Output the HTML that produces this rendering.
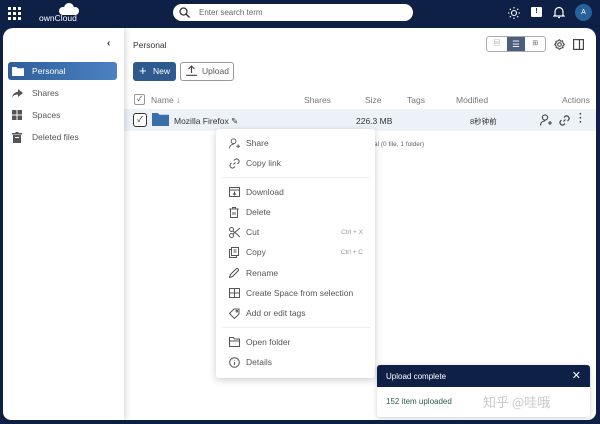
<!DOCTYPE html>
<html><head><meta charset="utf-8">
<style>
*{box-sizing:border-box;margin:0;padding:0}
body{width:600px;height:424px;background:#0e2045;font-family:"Liberation Sans","Noto Sans CJK SC",sans-serif;font-size:8.5px;color:#4b4f58;position:relative;overflow:hidden}
.abs{position:absolute}
.side{left:3px;top:28px;width:121px;height:392px;background:#fff;border-radius:10px 0 0 8px;box-shadow:2px 0 6px rgba(0,0,0,.15);z-index:2}
.main{left:124px;top:28px;width:472px;height:392px;background:#fff;border-radius:0 10px 8px 0}
.nav{position:absolute;left:5px;width:109px;height:18px;display:flex;align-items:center;padding-left:24px;color:#555}
.nav.act{background:linear-gradient(90deg,#2f5d99,#4b82c3);color:#fff;border-radius:3px}
.nav svg{position:absolute;left:4px}
.menu{left:216px;top:129px;width:159px;height:249px;background:#fff;box-shadow:0 2px 8px rgba(0,0,0,.2);border-radius:3px;z-index:3}
.mi{position:absolute;left:0;width:159px;height:14px;display:flex;align-items:center;padding-left:30px;color:#555}
.mi svg{position:absolute;left:13px}
.mi .k{position:absolute;right:12px;font-size:6.5px;color:#999}
.sep{position:absolute;left:6px;width:148px;height:1px;background:#eee}
</style></head><body>
<svg class="abs" style="left:8px;top:7px" width="13" height="13" viewBox="0 0 13 13" fill="#fff">
<rect x="0" y="0" width="3" height="3"/><rect x="5" y="0" width="3" height="3"/><rect x="10" y="0" width="3" height="3"/>
<rect x="0" y="5" width="3" height="3"/><rect x="5" y="5" width="3" height="3"/><rect x="10" y="5" width="3" height="3"/>
<rect x="0" y="10" width="3" height="3"/><rect x="5" y="10" width="3" height="3"/><rect x="10" y="10" width="3" height="3"/></svg>
<svg class="abs" style="left:54px;top:2px" width="30" height="14" viewBox="0 0 30 14" fill="#fff"><circle cx="9" cy="9" r="4"/><circle cx="15" cy="6" r="5"/><circle cx="21" cy="9" r="4"/><rect x="9" y="8" width="12" height="5"/></svg>
<div class="abs" style="left:39px;top:13px;color:#fff;font-size:8.5px">ownCloud</div>
<div class="abs" style="left:173px;top:4px;width:240px;height:17px;background:#fff;border-radius:9px"></div>
<svg class="abs" style="left:179px;top:7px" width="11" height="11" viewBox="0 0 11 11" fill="none" stroke="#333" stroke-width="1.3"><circle cx="4.5" cy="4.5" r="3.5"/><path d="M7 7l3.5 3.5"/></svg>
<div class="abs" style="left:199px;top:8px;color:#666;font-size:8px">Enter search term</div>
<svg class="abs" style="left:508px;top:7px" width="12" height="12" viewBox="0 0 12 12" fill="none" stroke="#fff" stroke-width="1.1"><circle cx="6" cy="6" r="2.5"/><path d="M6 0v1.5M6 10.5V12M0 6h1.5M10.5 6H12M1.8 1.8l1 1M9.2 9.2l1 1M1.8 10.2l1-1M9.2 2.8l1-1"/></svg>
<div class="abs" style="left:531px;top:7px;width:11px;height:10px;background:#fff;border-radius:1px;color:#0e2045;font-size:7px;font-weight:bold;text-align:center;line-height:10px">!</div>
<svg class="abs" style="left:553px;top:6px" width="12" height="13" viewBox="0 0 12 13" fill="none" stroke="#fff" stroke-width="1.2"><path d="M2 9V5.5a4 4 0 0 1 8 0V9l1 1H1z"/><path d="M5 11.5h2"/></svg>
<div class="abs" style="left:575px;top:4px;width:17px;height:17px;border-radius:50%;background:#27619a;color:#fff;font-size:7px;text-align:center;line-height:17px">A</div>

<div class="abs side">
  <div class="abs" style="left:104px;top:10px;font-size:10px;color:#333;font-weight:bold">‹</div>
  <div class="nav act" style="top:34px">
    <svg width="12" height="10" viewBox="0 0 12 10" fill="#fff"><path d="M0 1h4.5l1 1.3H12V10H0z"/></svg>Personal</div>
  <div class="nav" style="top:56px"><svg width="11" height="9" viewBox="0 0 11 9" fill="#555"><path d="M6 0l5 4-5 4V5.5C3 5.5 1 6.5 0 9 .5 5 3 3 6 2.7z"/></svg>Shares</div>
  <div class="nav" style="top:78px"><svg width="10" height="10" viewBox="0 0 10 10" fill="#555"><rect width="4.5" height="4.5"/><rect x="5.5" width="4.5" height="4.5"/><rect y="5.5" width="4.5" height="4.5"/><rect x="5.5" y="5.5" width="4.5" height="4.5"/></svg>Spaces</div>
  <div class="nav" style="top:100px"><svg width="10" height="11" viewBox="0 0 10 11" fill="#555"><rect x="0" y="1" width="10" height="1.5"/><rect x="3.5" y="0" width="3" height="1.5"/><path d="M1 3h8v8H1z"/><rect x="3" y="5" width="4" height="1" fill="#fff"/></svg>Deleted files</div>
</div>

<div class="abs main">
  <div class="abs" style="left:9px;top:12px;color:#333">Personal</div>
  <div class="abs" style="left:362px;top:8px;width:60px;height:16px;border:1px solid #aaa;border-radius:3px;overflow:hidden;display:flex">
    <div style="width:20px;text-align:center;color:#888;line-height:14px;font-size:7px">▤</div>
    <div style="width:19px;background:#4b5e7c;color:#fff;text-align:center;line-height:14px">☰</div>
    <div style="width:20px;text-align:center;color:#666;line-height:14px;font-size:7px">⊞</div>
  </div>
  <svg class="abs" style="left:430px;top:11px" width="11" height="11" viewBox="0 0 12 12" fill="none" stroke="#444" stroke-width="1.2"><circle cx="6" cy="6" r="2"/><path d="M6 .8l1.3 1.5 2-.3.3 2L11.2 6l-1.6 1.5.3 2-2 .3L6 11.2 4.5 9.8l-2-.3-.3-2L.8 6l1.6-1.5-.3-2 2-.3z"/></svg>
  <svg class="abs" style="left:449px;top:11px" width="11" height="11" viewBox="0 0 11 11" fill="none" stroke="#444" stroke-width="1.2"><rect x=".6" y=".6" width="9.8" height="9.8"/><path d="M6.5 .6v9.8"/></svg>
  <div class="abs" style="left:9px;top:34px;width:43px;height:19px;background:#2f5a8f;border-radius:3px;color:#fff;line-height:19px;padding-left:20px">New</div>
  <div class="abs" style="left:15px;top:36px;color:#fff;font-size:13px;line-height:13px">+</div>
  <div class="abs" style="left:56px;top:34px;width:54px;height:19px;border:1px solid #999;border-radius:3px;color:#555;line-height:17px;padding-left:21px">Upload</div>
  <svg class="abs" style="left:62px;top:37px" width="11" height="11" viewBox="0 0 11 11" fill="none" stroke="#444" stroke-width="1.1"><path d="M5.5 8V1M2.5 4l3-3 3 3M0 10.3h11"/></svg>
  <div class="abs" style="left:10px;top:66px;width:11px;height:11px;border:1px solid #999;border-radius:2px;font-size:7px;text-align:center;line-height:9px;color:#222">✓</div>
  <div class="abs" style="left:27px;top:67px;color:#777">Name ↓</div>
  <div class="abs" style="left:180px;top:67px;color:#777">Shares</div>
  <div class="abs" style="left:241px;top:67px;color:#777">Size</div>
  <div class="abs" style="left:283px;top:67px;color:#777">Tags</div>
  <div class="abs" style="left:332px;top:67px;color:#777">Modified</div>
  <div class="abs" style="left:438px;top:67px;color:#777">Actions</div>
  <div class="abs" style="left:0;top:81px;width:472px;height:22px;background:#edf2f9"></div>
  <div class="abs" style="left:9px;top:85px;width:14px;height:14px;border:1.3px solid #333;border-radius:3px;background:#fff;font-size:8px;text-align:center;line-height:12px;color:#222">✓</div>
  <svg class="abs" style="left:28px;top:85px" width="17" height="13" viewBox="0 0 17 13" fill="#3a6ea8"><path d="M0 0h6l1.5 1.7H17V13H0z"/></svg>
  <div class="abs" style="left:50px;top:88px;color:#333">Mozilla Firefox ✎</div>
  <div class="abs" style="left:232px;top:88px;color:#333">226.3 MB</div>
  <div class="abs" style="left:346px;top:88px;color:#333;font-size:7.5px">8秒钟前</div>
  <svg class="abs" style="left:416px;top:86px" width="12" height="12" viewBox="0 0 12 12" fill="none" stroke="#444" stroke-width="1.1"><circle cx="5" cy="3.5" r="2.6"/><path d="M.5 11.5c0-3 2-4.5 4.5-4.5M8 9h4M10 7v4"/></svg>
  <svg class="abs" style="left:435px;top:87px" width="11" height="11" viewBox="0 0 11 11" fill="none" stroke="#444" stroke-width="1.2"><path d="M4.5 6.5l2-2M5 2.5l1-1a2.5 2.5 0 0 1 3.5 3.5l-1 1M6 8.5l-1 1A2.5 2.5 0 0 1 1.5 6l1-1"/></svg>
  <div class="abs" style="left:455px;top:85px;color:#333;font-size:10px;font-weight:bold;line-height:4px;width:4px">·<br>·<br>·</div>
  <div class="abs" style="left:250px;top:113px;color:#666;font-size:6.5px">al (0 file, 1 folder)</div>
</div>

<div class="abs menu">
  <div class="mi" style="top:7px"><svg width="11" height="11" viewBox="0 0 12 12" fill="none" stroke="#555" stroke-width="1"><circle cx="5" cy="3.5" r="2.6"/><path d="M.5 11.5c0-3 2-4.5 4.5-4.5M8 9h4M10 7v4"/></svg>Share</div>
  <div class="mi" style="top:27px"><svg width="11" height="11" viewBox="0 0 11 11" fill="none" stroke="#555" stroke-width="1"><path d="M4.5 6.5l2-2M5 2.5l1-1a2.5 2.5 0 0 1 3.5 3.5l-1 1M6 8.5l-1 1A2.5 2.5 0 0 1 1.5 6l1-1"/></svg>Copy link</div>
  <div class="sep" style="top:48px"></div>
  <div class="mi" style="top:56px"><svg width="11" height="10" viewBox="0 0 11 10" fill="none" stroke="#555" stroke-width="1"><rect x=".5" y=".5" width="10" height="9"/><path d="M.5 3h10M5.5 4.5v3.5M4 6.5l1.5 1.5 1.5-1.5"/></svg>Download</div>
  <div class="mi" style="top:76px"><svg width="10" height="11" viewBox="0 0 10 11" fill="none" stroke="#555" stroke-width="1"><path d="M0 2h10M3.5 2V.5h3V2M1.5 2v8.5h7V2M4 5v3M6 5v3"/></svg>Delete</div>
  <div class="mi" style="top:96px"><svg width="11" height="11" viewBox="0 0 11 11" fill="none" stroke="#555" stroke-width="1"><circle cx="2.5" cy="2.5" r="2"/><circle cx="2.5" cy="8.5" r="2"/><path d="M4 4l7 6M4 7l7-6"/></svg>Cut<span class="k">Ctrl + X</span></div>
  <div class="mi" style="top:116px"><svg width="10" height="11" viewBox="0 0 10 11" fill="none" stroke="#555" stroke-width="1"><rect x="2.5" y=".5" width="7" height="8"/><path d="M2.5 2.5H.5v8h7V8.5M4.5 3h3M4.5 5h3"/></svg>Copy<span class="k">Ctrl + C</span></div>
  <div class="mi" style="top:137px"><svg width="10" height="10" viewBox="0 0 10 10" fill="none" stroke="#555" stroke-width="1.1"><path d="M.5 9.5l1-3L8 0l2 2-6.5 6.5z"/></svg>Rename</div>
  <div class="mi" style="top:157px"><svg width="11" height="10" viewBox="0 0 11 10" fill="none" stroke="#555" stroke-width="1"><rect x=".5" y=".5" width="10" height="9"/><path d="M.5 5h10M5.5 .5v9"/></svg>Create Space from selection</div>
  <div class="mi" style="top:177px"><svg width="11" height="11" viewBox="0 0 11 11" fill="none" stroke="#555" stroke-width="1"><path d="M.5 5.5L5 1h5v5l-4.5 4.5z"/><circle cx="7.8" cy="3.2" r=".8"/></svg>Add or edit tags</div>
  <div class="sep" style="top:198px"></div>
  <div class="mi" style="top:206px"><svg width="11" height="10" viewBox="0 0 11 10" fill="none" stroke="#555" stroke-width="1"><path d="M.5 9.5V.5h4l1 1.5h5v7.5zM.5 4h10"/></svg>Open folder</div>
  <div class="mi" style="top:226px"><svg width="11" height="11" viewBox="0 0 11 11" fill="none" stroke="#555" stroke-width="1"><circle cx="5.5" cy="5.5" r="4.8"/><path d="M5.5 5v3M5.5 3v.5"/></svg>Details</div>
</div>

<div class="abs" style="left:377px;top:365px;width:213px;height:52px;background:#fff;box-shadow:0 1px 5px rgba(0,0,0,.2);border-radius:3px;z-index:4;overflow:hidden">
  <div style="height:22px;background:#0e2045;color:#fff;padding:7px 0 0 9px;font-size:8px">Upload complete<span style="position:absolute;right:9px;top:4px;font-size:11px">✕</span></div>
  <div style="padding:10px 0 0 9px;color:#2f5d50;font-size:8px">152 item uploaded</div>
  <div style="position:absolute;left:106px;top:27px;color:#c8c8c8;font-size:13px;font-family:'Noto Sans CJK SC',sans-serif">知乎 @哇哦</div>
</div>
</body></html>
